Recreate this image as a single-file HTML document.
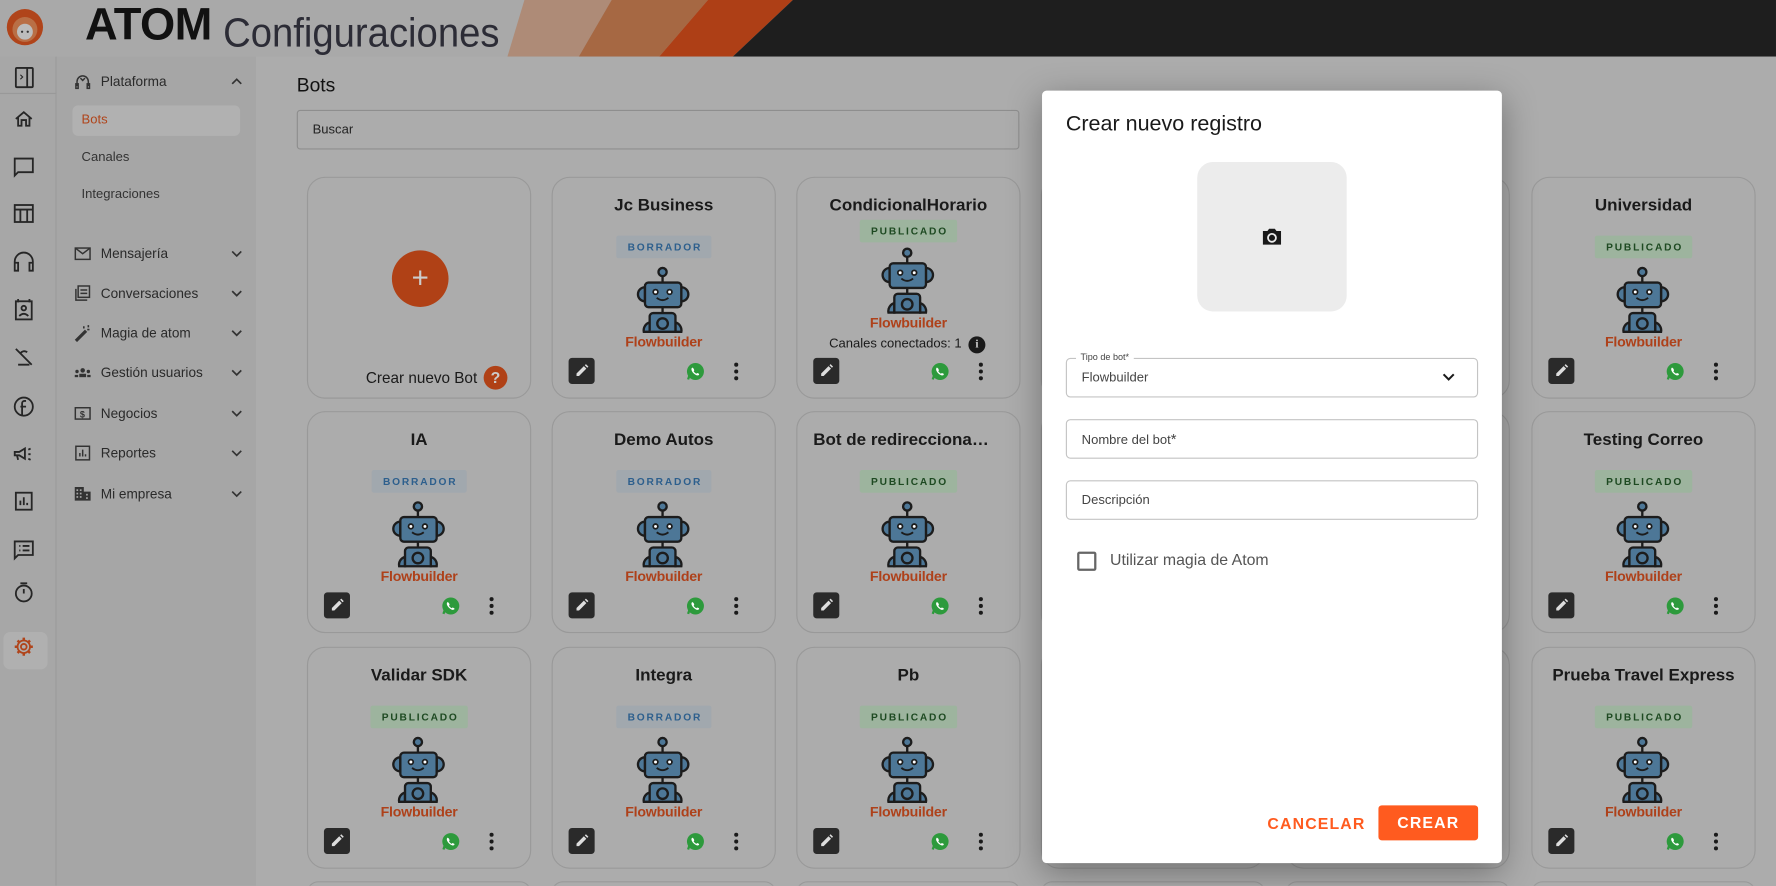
<!DOCTYPE html>
<html><head><meta charset="utf-8">
<style>
*{box-sizing:border-box;margin:0;padding:0}
html,body{width:1776px;height:886px;overflow:hidden;background:#acacac;font-family:"Liberation Sans",sans-serif}
#s{position:absolute;left:0;top:0;width:1568px;height:782px;transform:scale(1.13265);transform-origin:0 0;background:#acacac;overflow:hidden}
.abs{position:absolute}
#hdr{left:0;top:0;width:1568px;height:50px;background:#a9a9a9;overflow:hidden}
#rail{left:0;top:50px;width:50px;height:732px;background:#a7a7a7;border-right:1px solid #999}
#side{left:50px;top:50px;width:176px;height:732px;background:#a6a6a6}
.mi{position:absolute;left:65px;font-size:12px;color:#2a2a2a;display:flex;align-items:center;gap:8px;width:152px}
.mi svg{width:16px;height:16px}
.mi .ch{position:absolute;right:2px;width:12px;height:12px}
.sub{position:absolute;left:72px;font-size:11.5px;color:#333}
.card{position:absolute;width:198px;height:196px;border:1px solid #999;border-radius:16px;background:#acacac}
.card .t{position:absolute;left:0;right:0;top:16px;text-align:center;font-weight:bold;font-size:15px;color:#1a1a1a;white-space:nowrap;overflow:hidden;text-overflow:ellipsis;padding:0 14px}
.badge{position:absolute;left:50%;transform:translateX(-50%);height:20px;line-height:20px;font-size:9px;font-weight:bold;letter-spacing:1.6px;padding:0 8px 0 10px;border-radius:2px}
.b{background:#a1a8ae;color:#2d5f8d}
.p{background:#9db49e;color:#1e4a22}
.rb{position:absolute;left:50%;margin-left:-26px;width:52px;height:60px}
.fb{position:absolute;left:0;right:0;text-align:center;font-size:12.5px;font-weight:bold;color:#ae411a;letter-spacing:-.2px}
.ed{position:absolute;left:14px;top:159px;width:23px;height:23px;background:#2a2a2a;border-radius:3px}
.wa{position:absolute;left:118px;top:163px;width:16px;height:16px}
.dt{position:absolute;left:158px;top:162px;width:8px;height:18px}
.modal{left:920px;top:80px;width:406px;height:682px;background:#fff;border-radius:4px;box-shadow:0 8px 30px rgba(0,0,0,.35)}
.fld{position:absolute;left:21px;width:364px;height:35px;border:1px solid #c4c4c4;border-radius:4px;font-size:11.5px;color:#444;padding-left:13px;line-height:33px}
</style></head><body>
<svg width="0" height="0" style="position:absolute">
<defs>
<symbol id="robot" viewBox="20 7 50 58">
<g stroke="#1c1c1c" stroke-width="2" fill="#4d7797">
<line x1="44" y1="15" x2="44" y2="21"/>
<circle cx="44" cy="12" r="3.5"/>
<path d="M29 25a6 6 0 0 0 0 12z"/><path d="M60 25a6 6 0 0 1 0 12z"/>
<rect x="29" y="21" width="31" height="21" rx="3"/>
<line x1="44" y1="42" x2="44" y2="47"/>
<path d="M33 55a7 7 0 0 0-5 8h5z"/><path d="M55 55a7 7 0 0 1 5 8h-5z"/>
<path d="M33 63V50a3 3 0 0 1 3-3h16a3 3 0 0 1 3 3v13z"/>
<circle cx="44" cy="56" r="4.5"/>
</g>
<g fill="#fff" stroke="#1c1c1c" stroke-width="1.5"><circle cx="38" cy="29" r="2"/><circle cx="50" cy="29" r="2"/></g>
<path d="M39 34q5 4 10 0" stroke="#1c1c1c" stroke-width="1.6" fill="none"/>
</symbol>
<symbol id="wa" viewBox="0 0 16 16"><circle cx="8" cy="8" r="7.5" fill="#2d9a3c"/><path d="M1.5 15l1.2-3.5" stroke="#2d9a3c" stroke-width="2"/><path d="M5.2 4.5c-.8.6-1 1.6-.4 2.9.8 1.7 2.2 3 3.9 3.8 1.2.5 2.1.2 2.6-.5l-.3-.8-1.5-.6-.7.7c-1-.4-1.9-1.3-2.4-2.3l.6-.7-.6-1.6z" fill="#fff"/></symbol>
<symbol id="ed" viewBox="0 0 23 23"><path d="M7 16v-2.2l6.5-6.5 2.2 2.2L9.2 16zM14.3 6.5l1-1 2.2 2.2-1 1z" fill="#ddd"/></symbol>
<symbol id="dt" viewBox="0 0 8 18"><circle cx="4" cy="3" r="1.8" fill="#1a1a1a"/><circle cx="4" cy="9" r="1.8" fill="#1a1a1a"/><circle cx="4" cy="15" r="1.8" fill="#1a1a1a"/></symbol>
<symbol id="chd" viewBox="0 0 12 12"><path d="M2 4l4 4 4-4" stroke="#333" stroke-width="1.5" fill="none"/></symbol>
</defs></svg>
<div id="s">
<div id="hdr" class="abs">
<svg class="abs" style="left:0;top:0" width="1568" height="50">
<polygon points="463,0 540,0 511,50 448,50" fill="#ae8b77"/>
<polygon points="540,0 625,0 582,50 511,50" fill="#a66843"/>
<polygon points="625,0 700,0 647,50 582,50" fill="#ae3f16"/>
<polygon points="700,0 1568,0 1568,50 647,50" fill="#1e1e1e"/>
<circle cx="22" cy="24" r="16" fill="#b0441a"/><circle cx="22" cy="26" r="11" fill="#b96f46"/><circle cx="22" cy="28" r="7" fill="#bdbdbd"/>
<circle cx="19.5" cy="28" r="1" fill="#333"/><circle cx="24.5" cy="28" r="1" fill="#333"/>
<text x="75" y="35" font-family="Liberation Sans" font-weight="bold" font-size="40" fill="#111" letter-spacing="-0.5" textLength="112" lengthAdjust="spacingAndGlyphs">ATOM</text>
<text x="197" y="41" font-family="Liberation Sans" font-size="36" fill="#2c2c36" textLength="244" lengthAdjust="spacingAndGlyphs">Configuraciones</text>
</svg>
</div>
<div id="rail" class="abs">
<div class="abs" style="left:0;top:32px;width:50px;border-top:1px solid #999"></div>
<div class="abs" style="left:3px;top:508px;width:39px;height:33px;background:#b0b0b0;border-radius:6px"></div>
</div>
<svg class="abs" style="left:0;top:50px" width="50" height="540" fill="none" stroke="#262626" stroke-width="1.6">
<rect x="14" y="10" width="15" height="17" rx="1"/><line x1="24" y1="10" x2="24" y2="27"/><path d="M18 16l2 2-2 2" stroke-width="1"/>
<path d="M14 55l7-6 7 6M16 53v8h3v-5h4v5h3v-8"/>
<path d="M13 90h16v12H16l-3 3z"/>
<rect x="13" y="131" width="16" height="15"/><line x1="13" y1="135" x2="29" y2="135"/><line x1="18" y1="135" x2="18" y2="146"/><line x1="24" y1="135" x2="24" y2="146"/>
<path d="M13 186v-5a8 8 0 0 1 16 0v5M13 182h3v7h-3zM26 182h3v7h-3z"/>
<rect x="14" y="216" width="14" height="16"/><circle cx="21" cy="222" r="2"/><path d="M17 229q4-4 8 0M16 214v3M26 214v3"/>
<path d="M14 258l14 14M16 272h10M18 262a4 4 0 0 1 6-1"/>
<circle cx="21" cy="309" r="8"/><path d="M23 304h-1.5a2 2 0 0 0-2 2v11M18 309h5"/>
<path d="M13 349h4l5-3v9l-5-3h-4zM15 352l1 4M25 347l2-1M25 351h2M25 355l2 1"/>
<rect x="14" y="385" width="14" height="15"/><path d="M18 396v-4M21 396v-7M24 396v-2"/>
<path d="M13 428h16v12H16l-3 3zM17 432h1M20 432h6M17 436h1M20 436h6"/>
<circle cx="21" cy="474" r="7"/><path d="M18 465h6M21 474v-4"/>
<path d="M21 513v2M21 527v2M13 521h2M27 521h2M15.5 515.5l1.5 1.5M25 525l1.5 1.5M15.5 526.5l1.5-1.5M25 517l1.5-1.5" stroke="#b0441a" stroke-width="2.2"/><circle cx="21" cy="521" r="5.5" stroke="#b0441a"/><circle cx="21" cy="521" r="2.5" stroke="#b0441a"/>
</svg>
<div id="side" class="abs"></div>
<div class="mi" style="top:64px"><svg viewBox="0 0 16 16" fill="none" stroke="#333" stroke-width="1.3"><path d="M3 12V8a5 5 0 0 1 10 0v4M6 5l2 2 2-2"/><rect x="2" y="10" width="2" height="4"/><rect x="12" y="10" width="2" height="4"/></svg>Plataforma<svg class="ch" viewBox="0 0 12 12"><path d="M2 8l4-4 4 4" stroke="#333" stroke-width="1.5" fill="none"/></svg></div>
<div class="abs" style="left:64px;top:93px;width:148px;height:27px;background:#b1b1b1;border-radius:5px"></div>
<div class="sub" style="top:100px;color:#b0441a">Bots</div>
<div class="sub" style="top:133px">Canales</div>
<div class="sub" style="top:166px">Integraciones</div>
<div class="mi" style="top:216px"><svg viewBox="0 0 16 16" fill="none" stroke="#333" stroke-width="1.3"><rect x="1.5" y="3" width="13" height="10"/><path d="M1.5 3l6.5 5 6.5-5"/></svg>Mensajería<svg class="ch"><use href="#chd"/></svg></div>
<div class="mi" style="top:251px"><svg viewBox="0 0 16 16" fill="none" stroke="#333" stroke-width="1.3"><rect x="4" y="1.5" width="10" height="10"/><path d="M2 4v10h10M6 5h6M6 8h6"/></svg>Conversaciones<svg class="ch"><use href="#chd"/></svg></div>
<div class="mi" style="top:286px"><svg viewBox="0 0 16 16" fill="none" stroke="#333" stroke-width="1.4"><path d="M2 14l8-8 1 1-8 8zM9 2v2M12 5h2M13 1v2"/></svg>Magia de atom<svg class="ch"><use href="#chd"/></svg></div>
<div class="mi" style="top:321px"><svg viewBox="0 0 16 16" fill="#333"><circle cx="8" cy="6" r="2"/><circle cx="3" cy="7" r="1.5"/><circle cx="13" cy="7" r="1.5"/><rect x="5" y="9" width="6" height="3"/><rect x="1" y="10" width="3" height="2"/><rect x="12" y="10" width="3" height="2"/></svg>Gestión usuarios<svg class="ch"><use href="#chd"/></svg></div>
<div class="mi" style="top:357px"><svg viewBox="0 0 16 16" fill="none" stroke="#333" stroke-width="1.3"><rect x="1.5" y="3" width="13" height="10"/><text x="5.5" y="11.5" font-size="8" fill="#333" stroke="none" font-weight="bold">$</text></svg>Negocios<svg class="ch"><use href="#chd"/></svg></div>
<div class="mi" style="top:392px"><svg viewBox="0 0 16 16" fill="none" stroke="#333" stroke-width="1.3"><rect x="2" y="2" width="12" height="12"/><path d="M5.5 11V8M8 11V5M10.5 11V9"/></svg>Reportes<svg class="ch"><use href="#chd"/></svg></div>
<div class="mi" style="top:428px"><svg viewBox="0 0 16 16" fill="#333"><path d="M1 2h8v12H1zM9 6h6v8H9z"/><g fill="#a6a6a6"><rect x="2.5" y="4" width="1.5" height="1.5"/><rect x="5.5" y="4" width="1.5" height="1.5"/><rect x="2.5" y="7" width="1.5" height="1.5"/><rect x="5.5" y="7" width="1.5" height="1.5"/><rect x="2.5" y="10" width="1.5" height="1.5"/><rect x="5.5" y="10" width="1.5" height="1.5"/><rect x="11" y="8" width="1.5" height="1.5"/><rect x="11" y="11" width="1.5" height="1.5"/></g></svg>Mi empresa<svg class="ch"><use href="#chd"/></svg></div>

<div class="abs" style="left:262px;top:66px;font-size:17px;color:#111">Bots</div>
<div class="abs" style="left:262px;top:97px;width:638px;height:35px;border:1px solid #8e8e8e;border-radius:3px;font-size:11.5px;color:#222;padding-left:13px;line-height:35px">Buscar</div>

<div class="card" style="left:271px;top:156px">
<div class="abs" style="left:74px;top:64px;width:50px;height:50px;border-radius:50%;background:#b04116;color:#ccc;font-size:26px;line-height:48px;text-align:center">+</div>
<div class="abs" style="left:51px;top:169px;font-size:13.5px;color:#1a1a1a">Crear nuevo Bot</div>
<div class="abs" style="left:155px;top:166px;width:21px;height:21px;border-radius:50%;background:#b04116;color:#ccc;font-size:14px;font-weight:bold;line-height:21px;text-align:center">?</div>
</div>

<div class="card" style="left:487px;top:156px"><div class="t">Jc Business</div><div class="badge b" style="top:51px">BORRADOR</div><svg class="rb" style="top:78px"><use href="#robot"/></svg><div class="fb" style="top:138px">Flowbuilder</div><svg class="ed"><use href="#ed"/></svg><svg class="wa"><use href="#wa"/></svg><svg class="dt"><use href="#dt"/></svg></div>
<div class="card" style="left:703px;top:156px"><div class="t">CondicionalHorario</div><div class="badge p" style="top:37px">PUBLICADO</div><svg class="rb" style="top:61px"><use href="#robot"/></svg><div class="fb" style="top:121px">Flowbuilder</div><div class="abs" style="left:28px;top:141px;font-size:11.5px;color:#1a1a1a">Canales conectados: 1</div><div class="abs" style="left:151px;top:140px;width:15px;height:15px;border-radius:50%;background:#1a1a1a;color:#ccc;font-size:10px;font-weight:bold;text-align:center;line-height:15px;font-family:'Liberation Serif',serif">i</div><svg class="ed"><use href="#ed"/></svg><svg class="wa"><use href="#wa"/></svg><svg class="dt"><use href="#dt"/></svg></div>
<div class="card" style="left:919px;top:156px"></div>
<div class="card" style="left:1135px;top:156px"></div>
<div class="card" style="left:1352px;top:156px"><div class="t">Universidad</div><div class="badge p" style="top:51px">PUBLICADO</div><svg class="rb" style="top:78px"><use href="#robot"/></svg><div class="fb" style="top:138px">Flowbuilder</div><svg class="ed"><use href="#ed"/></svg><svg class="wa"><use href="#wa"/></svg><svg class="dt"><use href="#dt"/></svg></div>

<div class="card" style="left:271px;top:363px"><div class="t">IA</div><div class="badge b" style="top:51px">BORRADOR</div><svg class="rb" style="top:78px"><use href="#robot"/></svg><div class="fb" style="top:138px">Flowbuilder</div><svg class="ed"><use href="#ed"/></svg><svg class="wa"><use href="#wa"/></svg><svg class="dt"><use href="#dt"/></svg></div>
<div class="card" style="left:487px;top:363px"><div class="t">Demo Autos</div><div class="badge b" style="top:51px">BORRADOR</div><svg class="rb" style="top:78px"><use href="#robot"/></svg><div class="fb" style="top:138px">Flowbuilder</div><svg class="ed"><use href="#ed"/></svg><svg class="wa"><use href="#wa"/></svg><svg class="dt"><use href="#dt"/></svg></div>
<div class="card" style="left:703px;top:363px"><div class="t">Bot de redireccionamiento</div><div class="badge p" style="top:51px">PUBLICADO</div><svg class="rb" style="top:78px"><use href="#robot"/></svg><div class="fb" style="top:138px">Flowbuilder</div><svg class="ed"><use href="#ed"/></svg><svg class="wa"><use href="#wa"/></svg><svg class="dt"><use href="#dt"/></svg></div>
<div class="card" style="left:919px;top:363px"></div>
<div class="card" style="left:1135px;top:363px"></div>
<div class="card" style="left:1352px;top:363px"><div class="t">Testing Correo</div><div class="badge p" style="top:51px">PUBLICADO</div><svg class="rb" style="top:78px"><use href="#robot"/></svg><div class="fb" style="top:138px">Flowbuilder</div><svg class="ed"><use href="#ed"/></svg><svg class="wa"><use href="#wa"/></svg><svg class="dt"><use href="#dt"/></svg></div>

<div class="card" style="left:271px;top:571px"><div class="t">Validar SDK</div><div class="badge p" style="top:51px">PUBLICADO</div><svg class="rb" style="top:78px"><use href="#robot"/></svg><div class="fb" style="top:138px">Flowbuilder</div><svg class="ed"><use href="#ed"/></svg><svg class="wa"><use href="#wa"/></svg><svg class="dt"><use href="#dt"/></svg></div>
<div class="card" style="left:487px;top:571px"><div class="t">Integra</div><div class="badge b" style="top:51px">BORRADOR</div><svg class="rb" style="top:78px"><use href="#robot"/></svg><div class="fb" style="top:138px">Flowbuilder</div><svg class="ed"><use href="#ed"/></svg><svg class="wa"><use href="#wa"/></svg><svg class="dt"><use href="#dt"/></svg></div>
<div class="card" style="left:703px;top:571px"><div class="t">Pb</div><div class="badge p" style="top:51px">PUBLICADO</div><svg class="rb" style="top:78px"><use href="#robot"/></svg><div class="fb" style="top:138px">Flowbuilder</div><svg class="ed"><use href="#ed"/></svg><svg class="wa"><use href="#wa"/></svg><svg class="dt"><use href="#dt"/></svg></div>
<div class="card" style="left:919px;top:571px"></div>
<div class="card" style="left:1135px;top:571px"></div>
<div class="card" style="left:1352px;top:571px"><div class="t">Prueba Travel Express</div><div class="badge p" style="top:51px">PUBLICADO</div><svg class="rb" style="top:78px"><use href="#robot"/></svg><div class="fb" style="top:138px">Flowbuilder</div><svg class="ed"><use href="#ed"/></svg><svg class="wa"><use href="#wa"/></svg><svg class="dt"><use href="#dt"/></svg></div>

<div class="card" style="left:271px;top:778px;height:20px"></div>
<div class="card" style="left:487px;top:778px;height:20px"></div>
<div class="card" style="left:703px;top:778px;height:20px"></div>
<div class="card" style="left:919px;top:778px;height:20px"></div>
<div class="card" style="left:1135px;top:778px;height:20px"></div>
<div class="card" style="left:1352px;top:778px;height:20px"></div>

<div class="modal abs">
<div class="abs" style="left:21px;top:19px;font-size:19px;color:#1a1a1a">Crear nuevo registro</div>
<div class="abs" style="left:137px;top:63px;width:132px;height:132px;background:#ececec;border-radius:14px"></div>
<svg class="abs" style="left:193px;top:120px" width="20" height="18" viewBox="0 0 20 18"><path d="M2 4h4l1.5-2h5L14 4h4v12H2z" fill="#1a1a1a"/><circle cx="10" cy="10" r="3.5" fill="none" stroke="#ececec" stroke-width="1.6"/></svg>
<div class="fld" style="top:236px;line-height:35px">Flowbuilder</div>
<div class="abs" style="left:30px;top:231px;background:#fff;padding:0 4px;font-size:8px;color:#444">Tipo de bot*</div>
<svg class="abs" style="left:353px;top:248px" width="12" height="10" viewBox="0 0 12 10"><path d="M1.5 2.5l4.5 4.5 4.5-4.5" stroke="#1a1a1a" stroke-width="1.8" fill="none"/></svg>
<div class="fld" style="top:290px">Nombre del bot<span style="font-size:13px">*</span></div>
<div class="fld" style="top:344px;line-height:35px">Descripción</div>
<div class="abs" style="left:31px;top:407px;width:17px;height:17px;border:2px solid #666;border-radius:2px"></div>
<div class="abs" style="left:60px;top:406px;font-size:14px;color:#555">Utilizar magia de Atom</div>
<div class="abs" style="left:199px;top:639px;font-size:14px;font-weight:bold;color:#ff5b1f;letter-spacing:1px">CANCELAR</div>
<div class="abs" style="left:297px;top:631px;width:88px;height:31px;background:#ff5b1f;border-radius:3px;color:#fff;font-size:14px;font-weight:bold;letter-spacing:1px;text-align:center;line-height:31px">CREAR</div>
</div>
</div>
</body></html>
